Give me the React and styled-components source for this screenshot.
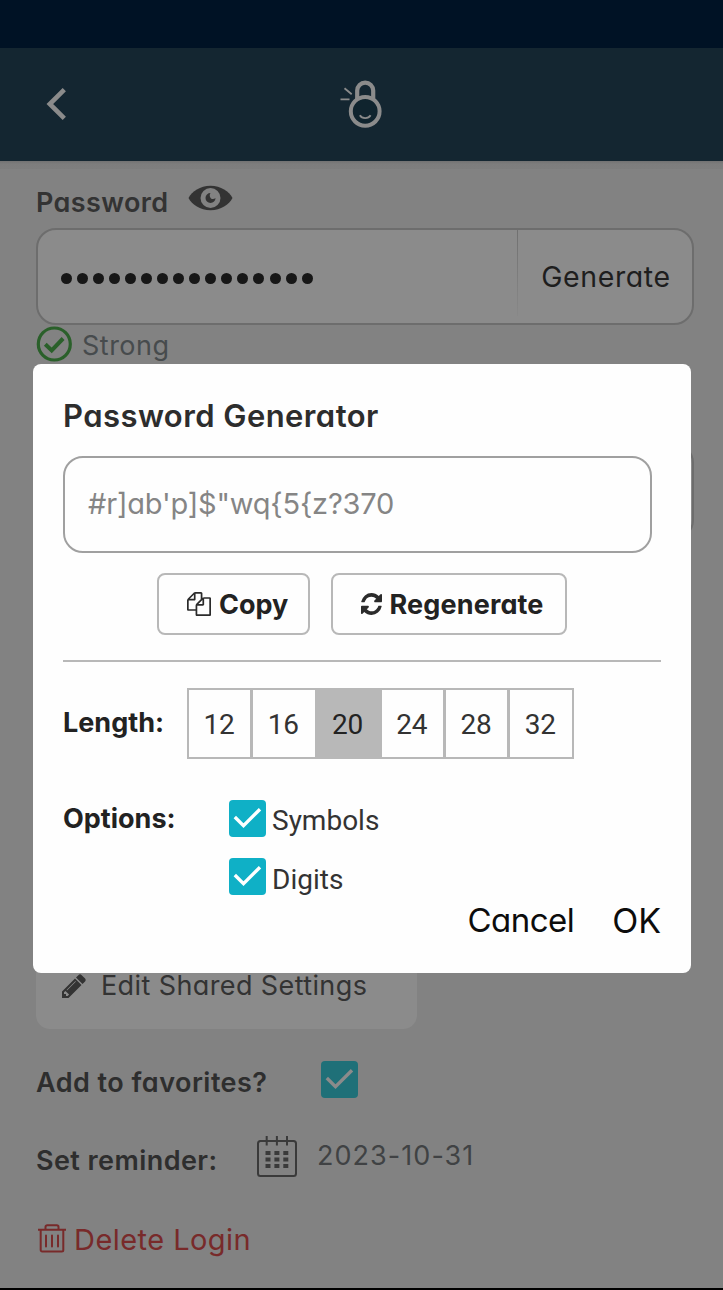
import React from "react";
import styled, { createGlobalStyle } from "styled-components";

const GlobalStyle = createGlobalStyle`
  *, *::before, *::after { box-sizing: border-box; }
  html, body { margin: 0; padding: 0; background: #000; overflow: hidden; }
  button { font: inherit; background: none; border: 0; padding: 0; margin: 0; }
  svg { display: block; flex: none; }
`;

const Screen = styled.div`
  position: relative;
  display: flex;
  flex-direction: column;
  width: 723px;
  height: 1290px;
  overflow: hidden;
  background: #828282;
  border-bottom: 2px solid #000;
`;

const Text = styled.span`
  display: block;
  height: 40px;
  padding-top: ${(p) => 2 * (p.$drop || 0)}px;
  font-family: "Inter", "Liberation Sans", sans-serif;
  font-feature-settings: "cv11" 1;
  font-size: ${(p) => p.$size || 27}px;
  font-weight: ${(p) => p.$weight || 400};
  letter-spacing: ${(p) => p.$track || 0}px;
  color: ${(p) => p.$color || "#333"};
  line-height: ${(p) => 40 - 2 * (p.$drop || 0)}px;
  white-space: nowrap;
`;

const PlainText = styled(Text)`
  font-family: "Roboto", sans-serif;
  font-feature-settings: normal;
`;

const StatusBar = styled.div`
  height: 48px;
  flex: none;
  background: #001225;
`;

const Header = styled.header`
  display: grid;
  grid-template-columns: 1fr auto 1fr;
  align-items: center;
  height: 113px;
  flex: none;
  padding: 0 46px 1px;
  background: #142631;
`;

const HeaderShade = styled.div`
  height: 8px;
  flex: none;
  background: linear-gradient(#727272, #7d7d7d 3px, #7e7e7e);
`;

const Content = styled.main`
  display: flex;
  flex-direction: column;
  align-items: stretch;
  padding: 7px 29px 0 36px;
`;

const PasswordHeading = styled.div`
  display: flex;
  align-items: center;
  height: 52px;
  gap: 19px;

  svg { margin-bottom: 8px; }
`;

const Field = styled.div`
  display: flex;
  height: 97px;
  flex: none;
  border: 2px solid ${(p) => p.$line || "#6d6d6d"};
  border-radius: 20px;
  background: ${(p) => p.$fill || "#8b8b8b"};
`;

const Dots = styled.div`
  display: flex;
  flex: 1;
  align-items: center;
  gap: 5.07px;
  padding: 4px 0 0 22.7px;
`;

const Dot = styled.i`
  width: 11px;
  height: 11px;
  border-radius: 50%;
  background: #171717;
`;

const Divider = styled.div`
  width: 1px;
  height: 86px;
  background: linear-gradient(#707070, #888);
`;

const GenerateButton = styled.button`
  display: flex;
  align-items: center;
  justify-content: center;
  width: 174px;
  padding-left: 2px;
`;

const StrengthRow = styled.div`
  display: flex;
  align-items: center;
  gap: 10px;
  height: 38px;
  margin-bottom: 80px;
`;

const EditButton = styled.button`
  display: flex;
  align-items: center;
  gap: 13px;
  width: 381px;
  height: 87px;
  margin-top: 402px;
  padding-left: 24px;
  border-radius: 14px;
  background: #8b8b8b;
`;

const FavoriteRow = styled.div`
  display: flex;
  align-items: center;
  height: 40px;
  margin-top: 33px;

  > :first-child { width: 285px; }
  > :last-child { margin-bottom: 5px; }
`;

const ReminderRow = styled.div`
  display: flex;
  align-items: center;
  height: 42px;
  margin-top: 37px;

  > :first-child { width: 220px; }
  > svg { margin: -9px 19px 0 0; }
  > :last-child { margin-top: -9px; }
`;

const DeleteButton = styled.button`
  display: flex;
  align-items: center;
  gap: 8px;
  height: 40px;
  margin-top: 38px;
  padding-left: 2px;
`;

const Dialog = styled.section`
  position: absolute;
  top: 363.5px;
  left: 33px;
  display: flex;
  flex-direction: column;
  width: 658px;
  height: 609px;
  padding: 32.5px 30px 0;
  border-radius: 8px;
  background: #fefefe;
`;

const GeneratedField = styled(Field)`
  align-items: center;
  width: 589px;
  margin-top: 20px;
  padding: 0 0 2px 23px;
`;

const Actions = styled.div`
  display: flex;
  gap: 20.5px;
  margin: 20px 0 0 94px;
`;

const ActionButton = styled.button`
  display: flex;
  align-items: center;
  gap: 8px;
  width: ${(p) => p.$width}px;
  height: 62px;
  padding-left: 28px;
  border: 2px solid #b8b8b8;
  border-radius: 8px;
`;

const Rule = styled.hr`
  width: 598px;
  height: 2px;
  flex: none;
  margin: 25px 0 26px;
  border: 0;
  background: #b8b8b8;
`;

const LengthRow = styled.div`
  display: grid;
  grid-template-columns: 124px 386.5px;
  align-items: center;
  height: 71px;

  > :first-child { margin-top: -5px; }
`;

const LengthPicker = styled.div`
  display: grid;
  grid-template-columns: repeat(6, 1fr);
  gap: 3px;
  height: 71px;
  padding: 2px;
  background: #b8b8b8;
`;

const LengthCell = styled.button`
  display: flex;
  align-items: center;
  justify-content: center;
  padding: 3px 1px 0 0;
  background: ${(p) => (p.$active ? "#b8b8b8" : "#fefefe")};
`;

const OptionsRow = styled.div`
  display: flex;
  margin-top: 39px;

  > :first-child { width: 166px; }
`;

const OptionList = styled.div`
  display: flex;
  flex-direction: column;
  gap: 18.5px;
`;

const Option = styled.label`
  display: flex;
  align-items: center;
  gap: 6px;
  height: 40px;
`;

const CheckTile = styled.span`
  display: flex;
  align-items: center;
  justify-content: center;
  width: 37px;
  height: 37px;
  border-radius: 4px;
  background: ${(p) => p.$fill};
`;

const Footer = styled.footer`
  display: flex;
  justify-content: flex-end;
  gap: 38px;
  margin-top: 2px;
`;

const Check = ({ fill, mark }) => (
  <CheckTile $fill={fill}>
    <svg width="37" height="37" viewBox="0 0 37 37" fill="none" stroke={mark} strokeWidth="3.4">
      <path d="M5.8 17 14.5 25.7 31 9.2" />
    </svg>
  </CheckTile>
);

const BackIcon = () => (
  <svg width="21" height="32" viewBox="0 0 21 32" fill="none" stroke="#8b8b8b" strokeWidth="4.6">
    <path d="M18.3 1.7 3.8 16l14.5 14.3" />
  </svg>
);

const LogoIcon = () => (
  <svg width="44" height="50" viewBox="0 0 44 50" fill="none" stroke="#8b8b8b">
    <path d="M17.2 20v-8.400a8 8 0 0 1 16 0V20" strokeWidth="4.200" />
    <circle cx="25.200" cy="32.300" r="14.400" strokeWidth="4" fill="#10242e" />
    <path d="M19.800 36.300c2.300 3.700 8.500 3.700 10.800 0" strokeWidth="1.800" />
    <path d="M4.500 9.200l7.200 6M.5 20.400h9" strokeWidth="1.800" />
  </svg>
);

const EyeIcon = () => (
  <svg width="45" height="26" viewBox="0 0 45 26">
    <path d="M.5 13C4 6.500 12 .8 22.500 .8S41 6.500 44.500 13C41 19.500 33 25.200 22.500 25.200S4 19.500.5 13z" fill="#333" />
    <circle cx="22.500" cy="13" r="10" fill="#828282" />
    <path d="M22.500 8a5 5 0 1 0 5 5c-1.300 1.300-3.500 1.400-4.700.2-1.300-1.300-1.400-3.500-.3-5.200z" fill="#333" />
  </svg>
);

const StrongIcon = () => (
  <svg width="36" height="36" viewBox="0 0 36 36" fill="none" stroke="#2a602a">
    <circle cx="18.300" cy="18" r="16" strokeWidth="3.200" />
    <path d="M9.300 18.300 15.700 24.500 27.100 12.500" strokeWidth="4" />
  </svg>
);

const CopyIcon = () => (
  <svg width="24" height="24" viewBox="0 0 1792 1792" fill="#2b2b2b">
    <path d="M1696 384q40 0 68 28t28 68v1216q0 40-28 68t-68 28h-960q-40 0-68-28t-28-68v-288h-544q-40 0-68-28t-28-68v-672q0-40 20-88t48-76l408-408q28-28 76-48t88-20h416q40 0 68 28t28 68v328q68-40 128-40h416zm-544 213l-299 299h299v-299zm-640-384l-299 299h299v-299zm196 647l316-316v-416h-384v416q0 40-28 68t-68 28h-416v640h512v-256q0-40 20-88t48-76zm956 804v-1152h-384v416q0 40-28 68t-68 28h-416v640h896z" />
  </svg>
);

const RefreshIcon = () => (
  <svg width="21" height="22" viewBox="128 128 1536 1536" preserveAspectRatio="none" fill="#2b2b2b">
    <path d="M1639 1056q0 5-1 7-64 268-268 434.500t-478 166.500q-146 0-282.500-55t-243.500-157l-129 129q-19 19-45 19t-45-19-19-45v-448q0-26 19-45t45-19h448q26 0 45 19t19 45-19 45l-137 137q71 66 161 102t187 36q134 0 250-65t186-179q11-17 53-117 8-23 30-23h192q13 0 22.500 9.500t9.500 22.500zm25-800v448q0 26-19 45t-45 19h-448q-26 0-45-19t-19-45 19-45l138-138q-148-137-349-137-134 0-250 65t-186 179q-11 17-53 117-8 23-30 23h-199q-13 0-22.500-9.500t-9.500-22.500v-7q65-268 270-434.500t480-166.500q146 0 284 55.500t245 156.500l130-129q19-19 45-19t45 19 19 45z" />
  </svg>
);

const PencilIcon = () => (
  <svg width="28" height="28" viewBox="0 0 1792 1792" fill="#333">
    <path d="M491 1536l91-91-235-235-91 91v107h128v128h107zm523-928q0-22-22-22-10 0-17 7l-542 542q-7 7-7 17 0 22 22 22 10 0 17-7l542-542q7-7 7-17zm-54-192l416 416-832 832h-416v-416zm683 96q0 53-37 90l-166 166-416-416 166-165q36-38 90-38 53 0 91 38l235 234q37 39 37 91z" />
  </svg>
);

const CalendarIcon = () => (
  <svg width="42" height="42" viewBox="0 0 42 42" fill="none" stroke="#3a3a3a" strokeWidth="2">
    <rect x="2" y="6" width="38" height="35" rx="2.500" />
    <path d="M10.700 1v9.500M20.900 1v9.500M31 1v9.500" />
    <path d="M9.500 18h22.800M9.500 24.600h22.800M9.500 31h22.800" strokeWidth="4" strokeDasharray="5 3.900" />
  </svg>
);

const TrashIcon = () => (
  <svg width="28" height="30" viewBox="0 0 28 30" fill="none" stroke="#782a2a" strokeWidth="2">
    <path d="M0 5.700h28M7.500 5.500V3a1.700 1.700 0 0 1 1.700-1.700h9.600a1.700 1.700 0 0 1 1.700 1.700V5.500" />
    <path d="M2.700 6v20a1.500 1.500 0 0 0 1.500 1.500h19.600a1.500 1.500 0 0 0 1.500-1.500v-20" />
    <path d="M8 11.500v11M14 11.500v11M20 11.500v11" strokeLinecap="round" />
  </svg>
);

const lengths = [12, 16, 20, 24, 28, 32];

export default function App() {
  return (
    <>
      <GlobalStyle />
      <Screen>
        <StatusBar />
        <Header>
          <BackIcon />
          <LogoIcon />
          <span />
        </Header>
        <HeaderShade />
        <Content>
          <PasswordHeading>
            <Text $weight={600} $track={0.4} $drop={1}>Password</Text>
            <EyeIcon />
          </PasswordHeading>
          <Field>
            <Dots>
              {Array.from({ length: 16 }, (_, i) => <Dot key={i} />)}
            </Dots>
            <Divider />
            <GenerateButton>
              <Text $size={28.5} $track={0.6} $color="#1e1e1e">Generate</Text>
            </GenerateButton>
          </Field>
          <StrengthRow>
            <StrongIcon />
            <Text $track={0.5} $drop={1.5} $color="#474b4d">Strong</Text>
          </StrengthRow>
          <Field />
          <EditButton>
            <PencilIcon />
            <Text $track={0.39}>Edit Shared Settings</Text>
          </EditButton>
          <FavoriteRow>
            <Text $weight={600} $track={0.47} $drop={1} $color="#2e2e2e">Add to favorites?</Text>
            <Check fill="#1f7078" mark="#8b8b8b" />
          </FavoriteRow>
          <ReminderRow>
            <Text $weight={600} $track={0.42} $drop={1} $color="#2e2e2e">Set reminder:</Text>
            <CalendarIcon />
            <Text $track={1.05} $color="#404244">2023-10-31</Text>
          </ReminderRow>
          <DeleteButton>
            <TrashIcon />
            <Text $size={29} $track={0.45} $drop={1} $color="#782a2a">Delete Login</Text>
          </DeleteButton>
        </Content>

        <Dialog>
          <Text $size={31} $weight={600} $track={0.43} $color="#2d2d2d">Password Generator</Text>
          <GeneratedField $line="#a0a0a0" $fill="#fefefe">
            <Text $size={29} $track={-0.2} $color="#858585">{"#r]ab'p]$\"wq{5{z?370"}</Text>
          </GeneratedField>
          <Actions>
            <ActionButton $width={153}>
              <CopyIcon />
              <Text $weight={700} $drop={1} $color="#222">Copy</Text>
            </ActionButton>
            <ActionButton $width={236}>
              <RefreshIcon />
              <Text $weight={700} $track={0.15} $drop={1} $color="#222">Regenerate</Text>
            </ActionButton>
          </Actions>
          <Rule />
          <LengthRow>
            <Text $weight={700} $drop={2} $color="#222">Length:</Text>
            <LengthPicker>
              {lengths.map((n) => (
                <LengthCell key={n} $active={n === 20}>
                  <PlainText $size={28} $color={n === 20 ? "#222" : "#333"}>{n}</PlainText>
                </LengthCell>
              ))}
            </LengthPicker>
          </LengthRow>
          <OptionsRow>
            <Text $weight={700} $drop={1} $color="#222">Options:</Text>
            <OptionList>
              <Option>
                <Check fill="#0fb0c6" mark="#fff" />
                <PlainText $size={28} $drop={3}>Symbols</PlainText>
              </Option>
              <Option>
                <Check fill="#0fb0c6" mark="#fff" />
                <PlainText $size={28} $drop={3}>Digits</PlainText>
              </Option>
            </OptionList>
          </OptionsRow>
          <Footer>
            <Text $size={33} $track={-0.55} $drop={1.5} $color="#0c0c0c">Cancel</Text>
            <Text $size={34} $drop={1.5} $color="#0c0c0c">OK</Text>
          </Footer>
        </Dialog>
      </Screen>
    </>
  );
}
